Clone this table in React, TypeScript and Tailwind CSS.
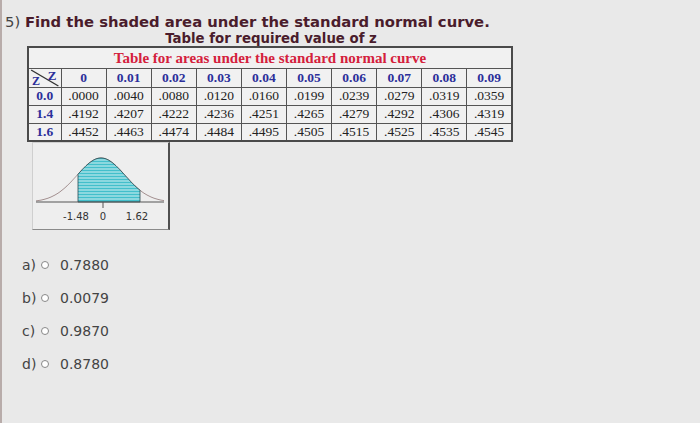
const head = ["0", "0.01", "0.02", "0.03", "0.04", "0.05", "0.06", "0.07", "0.08", "0.09"]

const rows: [string, string[]][] = [
  ["0.0", [".0000", ".0040", ".0080", ".0120", ".0160", ".0199", ".0239", ".0279", ".0319", ".0359"]],
  ["1.4", [".4192", ".4207", ".4222", ".4236", ".4251", ".4265", ".4279", ".4292", ".4306", ".4319"]],
  ["1.6", [".4452", ".4463", ".4474", ".4484", ".4495", ".4505", ".4515", ".4525", ".4535", ".4545"]],
]

const options = [
  ["a)", "0.7880"],
  ["b)", "0.0079"],
  ["c)", "0.9870"],
  ["d)", "0.8780"],
]

// bell curve in the box's own coordinates
const base = 59
const mid = 68
const yAt = (x: number) => base - 44 * Math.exp(-((x - mid) ** 2) / (2 * 24 * 24))

function curvePath(from: number, to: number) {
  const pts: string[] = []
  for (let x = from; x <= to; x += 1) pts.push(`${x},${yAt(x).toFixed(1)}`)
  return pts
}

function NormalCurve() {
  const shaded = curvePath(45, 107)
  const stripes = []
  for (let y = 14; y < base; y += 3) stripes.push(y)
  return (
    <svg width="136" height="86" viewBox="0 0 136 86">
      <defs>
        <clipPath id="area">
          <polygon points={`45,${base} ${shaded.join(" ")} 107,${base}`} />
        </clipPath>
      </defs>
      <polyline points={curvePath(3, 131).join(" ")} fill="none" stroke="#9a8585" strokeWidth="0.9" />
      <g clipPath="url(#area)">
        <rect x="40" y="0" width="72" height={base} fill="#43bfcb" />
        {stripes.map((y) => (
          <line key={y} x1="40" x2="112" y1={y} y2={y} stroke="#e6f7f8" strokeWidth="0.9" />
        ))}
      </g>
      <polygon points={`45,${base} ${shaded.join(" ")} 107,${base}`} fill="none" stroke="#2a4a50" strokeWidth="0.8" />
      <line x1="3" x2="131" y1={base} y2={base} stroke="#555" strokeWidth="1" />
      <line x1="70" x2="70" y1={base} y2={base + 6} stroke="#555" strokeWidth="1" />
      <text x="43" y="77" fontSize="10" fill="#333" textAnchor="middle" fontFamily="DejaVu Sans, sans-serif">-1.48</text>
      <text x="70" y="77" fontSize="10" fill="#333" textAnchor="middle" fontFamily="DejaVu Sans, sans-serif">0</text>
      <text x="104" y="77" fontSize="10" fill="#333" textAnchor="middle" fontFamily="DejaVu Sans, sans-serif">1.62</text>
    </svg>
  )
}

export default function App() {
  return (
    <div className="w-[700px] h-[423px] overflow-hidden bg-[#e9e9e9] border-l-2 border-[#b8acaa] font-['DejaVu_Sans',sans-serif]">
      <div className="pt-[13px] pl-[3px] text-[14.8px] leading-[18px] text-[#4a1c2c]">
        <span className="text-[#444]">5) </span>
        <span className="font-bold">Find the shaded area under the standard normal curve.</span>
      </div>
      <div className="w-[538px] text-center text-[13.3px] leading-[15px] font-bold text-[#4a1c2c]">
        Table for required value of z
      </div>

      <div className="ml-[25px] w-[486px]">
        <table className="w-[486px] table-fixed border-collapse border-2 border-[#4a4a4a] bg-[#f1f1f1] font-['Liberation_Serif',serif] text-[13.5px] leading-[14px]">
          <colgroup>
            <col className="w-[33px]" />
            {head.map((h) => (
              <col key={h} />
            ))}
          </colgroup>
          <tbody>
            <tr className="h-[21px]">
              <td colSpan={11} className="p-0 text-center font-bold text-[15px] text-[#d4203c] border border-[#555]">
                Table for areas under the standard normal curve
              </td>
            </tr>
            <tr className="h-[19px]">
              <td className="relative border border-[#555] p-0">
                <svg className="absolute inset-0" width="100%" height="100%" viewBox="0 0 30 18" preserveAspectRatio="none">
                  <line x1="2" y1="1" x2="28" y2="17" stroke="#333" strokeWidth="1.3" />
                </svg>
                <span className="absolute left-[3px] bottom-[0px] text-[12px] leading-[12px] font-bold text-[#2b2f9a]">Z</span>
                <span className="absolute right-[4px] top-[0px] text-[13px] leading-[13px] font-bold text-[#2b2f9a]">Z</span>
              </td>
              {head.map((h) => (
                <td key={h} className="p-0 border border-[#555] text-center font-bold text-[#2b2f9a]">
                  {h}
                </td>
              ))}
            </tr>
            {rows.map(([z, vals]) => (
              <tr key={z} className="h-[18px]">
                <td className="p-0 border border-[#555] text-center font-bold text-[#2b2f9a]">{z}</td>
                {vals.map((v) => (
                  <td key={v} className="p-0 border border-[#555] text-center text-[#222]">
                    {v}
                  </td>
                ))}
              </tr>
            ))}
          </tbody>
        </table>

        <div className="ml-[5px] w-[138px] h-[88px] bg-[#eeeeee] border-l border-t border-[#cfcfcf] border-r-2 border-r-[#505050] border-b border-b-[#8a8a8a]">
          <NormalCurve />
        </div>
      </div>

      <div className="mt-[26px] ml-[20px] flex flex-col gap-[15px] text-[14px] leading-[18px] text-[#444]">
        {options.map(([k, v]) => (
          <div key={k} className="flex items-center">
            <span className="w-[19px]">{k}</span>
            <span className="w-[8px] h-[8px] rounded-full border border-[#888] bg-white" />
            <span className="ml-[11px]">{v}</span>
          </div>
        ))}
      </div>
    </div>
  )
}
